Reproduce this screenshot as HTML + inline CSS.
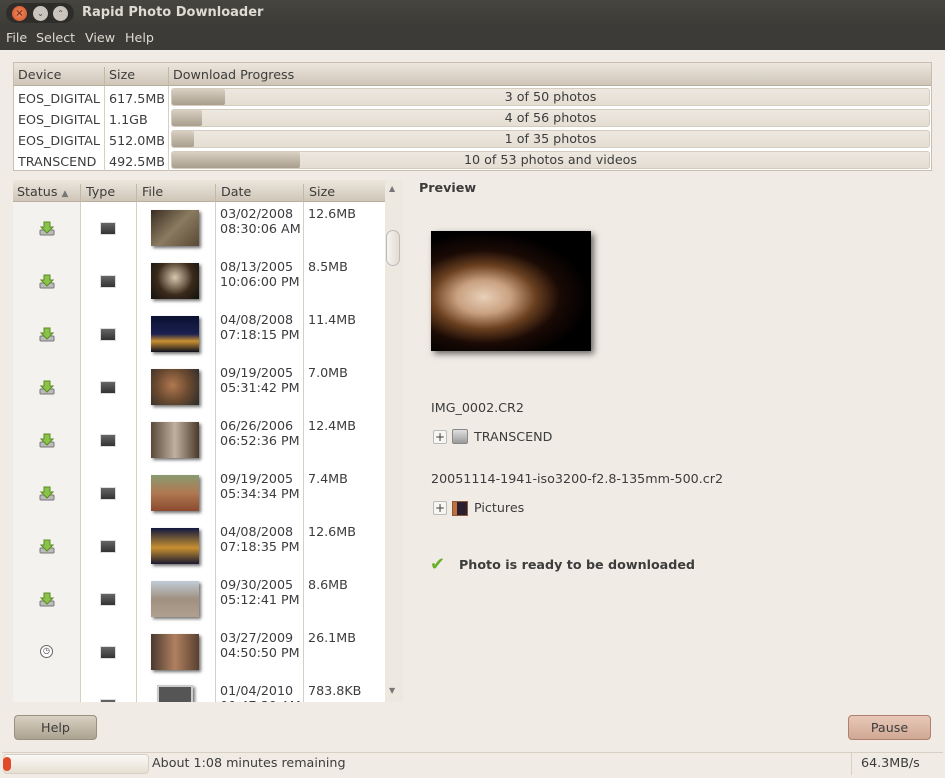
<!DOCTYPE html>
<html><head><style>
*{box-sizing:border-box;margin:0;padding:0}
body{width:945px;height:778px;background:#f0ebe4;font-family:"DejaVu Sans","Liberation Sans",sans-serif;font-size:12.7px;color:#3c3c3c;position:relative;overflow:hidden}
.abs{position:absolute}
#title{left:0;top:0;width:945px;height:27px;background:linear-gradient(#46453f,#3c3b37)}
#menu{left:0;top:27px;width:945px;height:23px;background:#3c3b37;color:#dfdbd2}
#menu span{position:absolute;top:3px}
.hdr{background:linear-gradient(#ece6dd,#cfc6b8);border-bottom:1px solid #b8ae9e;color:#3c3c3c}
.hdr div{position:absolute;top:4px}
.sep{position:absolute;top:0;width:1px;height:100%;background:#d6cfc4}
.bar{position:absolute;height:18px;background:linear-gradient(#ede8e0,#e4ddd2);border:1px solid #d4ccbf;border-radius:3px}
.fill{position:absolute;left:0;top:0;height:100%;background:linear-gradient(#d8cfc2,#a99e8d);border-radius:2px}
.bar span{position:absolute;left:0;right:0;top:0;text-align:center;line-height:16px}
.row{position:absolute;left:0;width:372px;height:53px}
.dl{position:absolute;left:26px;width:16px;height:15px}
.ty{position:absolute;left:87px;width:16px;height:13px;background:linear-gradient(#666,#333);border:1px solid #ddd}
.th{position:absolute;left:138px;width:48px;height:36px;box-shadow:2px 2px 3px rgba(0,0,0,.55)}
.dt{position:absolute;left:207px;line-height:15px}
.sz{position:absolute;left:295px}
.btn{position:absolute;height:25px;border-radius:4px;text-align:center;line-height:23px;font-size:12.7px}
</style></head><body>
<div id="title" class="abs">
 <div class="abs" style="left:6px;top:3px;width:68px;height:20px;border-radius:10px;background:#2e2d2a"></div>
 <div class="abs" style="left:12px;top:6px;width:15px;height:15px;border-radius:50%;background:radial-gradient(#f08a5d,#d4532a);color:#5a2010;font-size:10px;text-align:center;line-height:15px">×</div>
 <div class="abs" style="left:33px;top:6px;width:15px;height:15px;border-radius:50%;background:#c9c5bd;color:#444;font-size:8px;text-align:center;line-height:15px">⌄</div>
 <div class="abs" style="left:53px;top:6px;width:15px;height:15px;border-radius:50%;background:#c9c5bd;color:#444;font-size:8px;text-align:center;line-height:15px">⌃</div>
 <div class="abs" style="left:82px;top:5px;color:#dfdbd2;font-weight:bold;font-size:13px">Rapid Photo Downloader</div>
</div>
<div id="menu" class="abs"><span style="left:6px">File</span><span style="left:36px">Select</span><span style="left:85px">View</span><span style="left:125px">Help</span></div>

<div class="abs" style="left:13px;top:62px;width:919px;height:109px;background:#fff;border:1px solid #c8bfb2">
 <div class="abs hdr" style="left:0;top:0;width:917px;height:23px">
  <div style="left:4px">Device</div><div style="left:95px">Size</div><div style="left:159px">Download Progress</div>
  <div class="sep" style="left:90px;background:#c2b8a8"></div><div class="sep" style="left:154px;background:#c2b8a8"></div>
 </div>
 <div class="sep" style="left:90px;top:23px;height:85px"></div><div class="sep" style="left:154px;top:23px;height:85px"></div>
 <div class="abs" style="left:4px;top:25px;line-height:21px">EOS_DIGITAL<br>EOS_DIGITAL<br>EOS_DIGITAL<br>TRANSCEND</div>
 <div class="abs" style="left:95px;top:25px;line-height:21px">617.5MB<br>1.1GB<br>512.0MB<br>492.5MB</div>
 <div class="bar" style="left:157px;top:25px;width:759px"><div class="fill" style="width:53px"></div><span>3 of 50 photos</span></div>
 <div class="bar" style="left:157px;top:46px;width:759px"><div class="fill" style="width:30px"></div><span>4 of 56 photos</span></div>
 <div class="bar" style="left:157px;top:67px;width:759px"><div class="fill" style="width:22px"></div><span>1 of 35 photos</span></div>
 <div class="bar" style="left:157px;top:88px;width:759px"><div class="fill" style="width:128px"></div><span>10 of 53 photos and videos</span></div>
</div>

<div class="abs" style="left:13px;top:180px;width:390px;height:522px;background:#fff;overflow:hidden">
 <div class="abs" style="left:0;top:22px;width:67px;height:500px;background:#f4f2ee"></div>
 <div class="abs hdr" style="left:0;top:0;width:372px;height:22px">
  <div style="left:4px">Status <span style="font-size:9px;color:#777">▲</span></div><div style="left:73px">Type</div><div style="left:129px">File</div><div style="left:208px">Date</div><div style="left:296px">Size</div>
  <div class="sep" style="left:67px;background:#c2b8a8"></div><div class="sep" style="left:123px;background:#c2b8a8"></div><div class="sep" style="left:202px;background:#c2b8a8"></div><div class="sep" style="left:290px;background:#c2b8a8"></div>
 </div>
 <div class="sep" style="left:67px;top:22px;height:500px"></div><div class="sep" style="left:123px;top:22px;height:500px"></div><div class="sep" style="left:202px;top:22px;height:500px"></div><div class="sep" style="left:290px;top:22px;height:500px"></div>
 <div class="abs" style="left:372px;top:0;width:18px;height:522px;background:#ede8e0"></div>
 <div class="abs" style="left:376px;top:4px;font-size:8px;color:#777">▲</div>
 <div class="abs" style="left:376px;top:506px;font-size:8px;color:#777">▼</div>
 <div class="abs" style="left:373px;top:50px;width:14px;height:36px;border:1px solid #bbb;border-radius:7px;background:linear-gradient(90deg,#f6f3ee,#e3ddd3)"></div>

 <div class="row" style="top:22px"><svg class="dl" style="top:19px" viewBox="0 0 16 15"><rect x="1" y="9" width="14" height="5" rx="1" fill="#bbb" stroke="#777"/><path d="M5 1h6v5h3l-6 6-6-6h3z" fill="#8bc34a" stroke="#5a8a22"/></svg><div class="ty" style="top:20px"></div><div class="th" style="top:8px;background:linear-gradient(135deg,#3a2e22,#8a7a60 50%,#5a4a36)"></div><div class="dt" style="top:4px">03/02/2008<br>08:30:06 AM</div><div class="sz" style="top:4px">12.6MB</div></div>
 <div class="row" style="top:75px"><svg class="dl" style="top:19px" viewBox="0 0 16 15"><rect x="1" y="9" width="14" height="5" rx="1" fill="#bbb" stroke="#777"/><path d="M5 1h6v5h3l-6 6-6-6h3z" fill="#8bc34a" stroke="#5a8a22"/></svg><div class="ty" style="top:20px"></div><div class="th" style="top:8px;background:radial-gradient(circle at 50% 40%,#d8c8b0,#3a2a1a 55%,#111)"></div><div class="dt" style="top:4px">08/13/2005<br>10:06:00 PM</div><div class="sz" style="top:4px">8.5MB</div></div>
 <div class="row" style="top:128px"><svg class="dl" style="top:19px" viewBox="0 0 16 15"><rect x="1" y="9" width="14" height="5" rx="1" fill="#bbb" stroke="#777"/><path d="M5 1h6v5h3l-6 6-6-6h3z" fill="#8bc34a" stroke="#5a8a22"/></svg><div class="ty" style="top:20px"></div><div class="th" style="top:8px;background:linear-gradient(#0a1030,#1a2050 50%,#c89030 70%,#101020)"></div><div class="dt" style="top:4px">04/08/2008<br>07:18:15 PM</div><div class="sz" style="top:4px">11.4MB</div></div>
 <div class="row" style="top:181px"><svg class="dl" style="top:19px" viewBox="0 0 16 15"><rect x="1" y="9" width="14" height="5" rx="1" fill="#bbb" stroke="#777"/><path d="M5 1h6v5h3l-6 6-6-6h3z" fill="#8bc34a" stroke="#5a8a22"/></svg><div class="ty" style="top:20px"></div><div class="th" style="top:8px;background:radial-gradient(circle at 45% 45%,#b07850,#6a4a30 50%,#2a2a2a)"></div><div class="dt" style="top:4px">09/19/2005<br>05:31:42 PM</div><div class="sz" style="top:4px">7.0MB</div></div>
 <div class="row" style="top:234px"><svg class="dl" style="top:19px" viewBox="0 0 16 15"><rect x="1" y="9" width="14" height="5" rx="1" fill="#bbb" stroke="#777"/><path d="M5 1h6v5h3l-6 6-6-6h3z" fill="#8bc34a" stroke="#5a8a22"/></svg><div class="ty" style="top:20px"></div><div class="th" style="top:8px;background:linear-gradient(90deg,#5a4a3a,#c0b0a0,#4a3a2a)"></div><div class="dt" style="top:4px">06/26/2006<br>06:52:36 PM</div><div class="sz" style="top:4px">12.4MB</div></div>
 <div class="row" style="top:287px"><svg class="dl" style="top:19px" viewBox="0 0 16 15"><rect x="1" y="9" width="14" height="5" rx="1" fill="#bbb" stroke="#777"/><path d="M5 1h6v5h3l-6 6-6-6h3z" fill="#8bc34a" stroke="#5a8a22"/></svg><div class="ty" style="top:20px"></div><div class="th" style="top:8px;background:linear-gradient(#8a9a70,#b07850 50%,#8a4a30)"></div><div class="dt" style="top:4px">09/19/2005<br>05:34:34 PM</div><div class="sz" style="top:4px">7.4MB</div></div>
 <div class="row" style="top:340px"><svg class="dl" style="top:19px" viewBox="0 0 16 15"><rect x="1" y="9" width="14" height="5" rx="1" fill="#bbb" stroke="#777"/><path d="M5 1h6v5h3l-6 6-6-6h3z" fill="#8bc34a" stroke="#5a8a22"/></svg><div class="ty" style="top:20px"></div><div class="th" style="top:8px;background:linear-gradient(#101840,#c89030 55%,#1a1a30)"></div><div class="dt" style="top:4px">04/08/2008<br>07:18:35 PM</div><div class="sz" style="top:4px">12.6MB</div></div>
 <div class="row" style="top:393px"><svg class="dl" style="top:19px" viewBox="0 0 16 15"><rect x="1" y="9" width="14" height="5" rx="1" fill="#bbb" stroke="#777"/><path d="M5 1h6v5h3l-6 6-6-6h3z" fill="#8bc34a" stroke="#5a8a22"/></svg><div class="ty" style="top:20px"></div><div class="th" style="top:8px;background:linear-gradient(#c0ccd8,#a09080 50%,#b0a090)"></div><div class="dt" style="top:4px">09/30/2005<br>05:12:41 PM</div><div class="sz" style="top:4px">8.6MB</div></div>
 <div class="row" style="top:446px"><div class="abs" style="left:27px;top:19px;width:13px;height:13px;border-radius:50%;border:1px solid #666;background:#fff;font-size:8px;line-height:10px;text-align:center">◷</div><div class="ty" style="top:20px"></div><div class="th" style="top:8px;background:linear-gradient(90deg,#4a3a30,#b08060,#5a4030)"></div><div class="dt" style="top:4px">03/27/2009<br>04:50:50 PM</div><div class="sz" style="top:4px">26.1MB</div></div>
 <div class="row" style="top:499px"><div class="ty" style="top:20px"></div><div class="th" style="top:6px;left:144px;width:36px;height:28px;background:#555;border:2px solid #ccc"></div><div class="dt" style="top:4px">01/04/2010<br>00:47:39 AM</div><div class="sz" style="top:4px">783.8KB</div></div>
</div>

<div class="abs" style="left:419px;top:180px;font-weight:bold">Preview</div>
<div class="abs" style="left:431px;top:231px;width:160px;height:120px;background:radial-gradient(ellipse at 33% 55%,#e8d0b8 0,#c8a080 18%,#6a4020 34%,#1a0a05 50%,#000 70%);box-shadow:3px 3px 6px rgba(0,0,0,.55)"></div>
<div class="abs" style="left:431px;top:400px">IMG_0002.CR2</div>
<div class="abs" style="left:433px;top:430px;width:14px;height:14px;border:1px solid #bbb;border-radius:2px;background:#f8f6f2;font-size:12px;line-height:12px;text-align:center">+</div>
<div class="abs" style="left:452px;top:429px;width:16px;height:15px;border:1px solid #888;border-radius:2px;background:linear-gradient(#e0e0e0,#9a9a9a)"></div>
<div class="abs" style="left:474px;top:429px">TRANSCEND</div>
<div class="abs" style="left:431px;top:471px">20051114-1941-iso3200-f2.8-135mm-500.cr2</div>
<div class="abs" style="left:433px;top:501px;width:14px;height:14px;border:1px solid #bbb;border-radius:2px;background:#f8f6f2;font-size:12px;line-height:12px;text-align:center">+</div>
<div class="abs" style="left:452px;top:501px;width:16px;height:15px;border:1px solid #8a5a3a;background:linear-gradient(90deg,#c07040 30%,#2a2030 30%)"></div>
<div class="abs" style="left:474px;top:500px">Pictures</div>
<div class="abs" style="left:430px;top:554px;color:#6ab02a;font-size:18px">✔</div>
<div class="abs" style="left:459px;top:557px;font-weight:bold">Photo is ready to be downloaded</div>

<div class="btn" style="left:14px;top:715px;width:83px;background:linear-gradient(#d8d0c2,#aca290);border:1px solid #9a907f">Help</div>
<div class="btn" style="left:848px;top:715px;width:83px;background:linear-gradient(#e8c8b8,#d0a894);border:1px solid #b08070">Pause</div>

<div class="abs" style="left:2px;top:752px;width:941px;height:1px;background:#d8d0c4"></div>
<div class="abs" style="left:3px;top:754px;width:146px;height:20px;border-radius:4px;background:linear-gradient(#fbf9f6,#e6dfd4);border:1px solid #d8d0c4"></div>
<div class="abs" style="left:3px;top:757px;width:8px;height:14px;border-radius:4px;background:#e04a2a"></div>
<div class="abs" style="left:152px;top:755px">About 1:08 minutes remaining</div>
<div class="abs" style="left:851px;top:753px;width:1px;height:22px;background:#d8d0c4"></div>
<div class="abs" style="left:861px;top:755px">64.3MB/s</div>
</body></html>
